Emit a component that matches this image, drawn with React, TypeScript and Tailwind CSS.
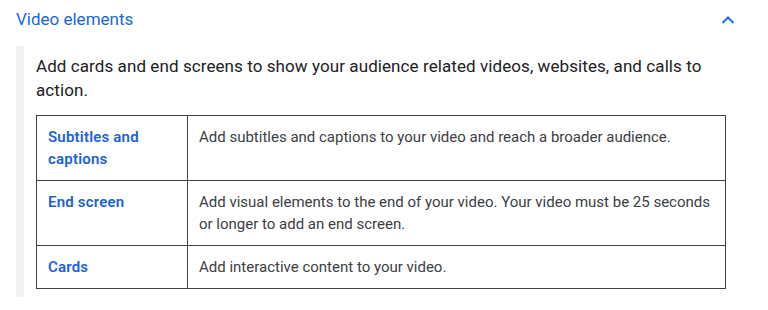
const rows = [
  {
    name: "Subtitles and captions",
    text: "Add subtitles and captions to your video and reach a broader audience.",
  },
  {
    name: "End screen",
    text: "Add visual elements to the end of your video. Your video must be 25 seconds or longer to add an end screen.",
  },
  { name: "Cards", text: "Add interactive content to your video." },
];

export default function App() {
  return (
    <div className="h-[310px] w-[768px] bg-white font-['Roboto',sans-serif]">
      <div className="flex h-[40px] items-center justify-between pl-4 pr-[28px]">
        <h2 className="text-[17px] font-normal text-[#1a66d8]">Video elements</h2>
        <svg width="24" height="24" viewBox="0 0 24 24" className="text-[#1a73e8]">
          <path d="M6.5 15 L12 9.5 L17.5 15" fill="none" stroke="currentColor" strokeWidth="2" />
        </svg>
      </div>
      <div className="ml-4 mt-[6px] mr-[42px] border-l-[8px] border-[#f1f3f4] pb-2 pl-3 pt-2">
        <p className="text-[17px] leading-6 tracking-[0.08px] text-[#202124]">
          Add cards and end screens to show your audience related videos, websites, and calls to action.
        </p>
        <table className="mt-[13px] w-[690px] border-collapse text-[15px] leading-[22px]">
          <tbody>
            {rows.map((row) => (
              <tr key={row.name}>
                <td className="w-[151px] border border-[#3c4043] px-[11px] py-[10px] align-top font-semibold tracking-[0.2px] text-[#1a62d6]">
                  {row.name}
                </td>
                <td className="border border-[#3c4043] px-[11px] py-[10px] align-top text-[#3c4043]">
                  {row.text}
                </td>
              </tr>
            ))}
          </tbody>
        </table>
      </div>
    </div>
  );
}
